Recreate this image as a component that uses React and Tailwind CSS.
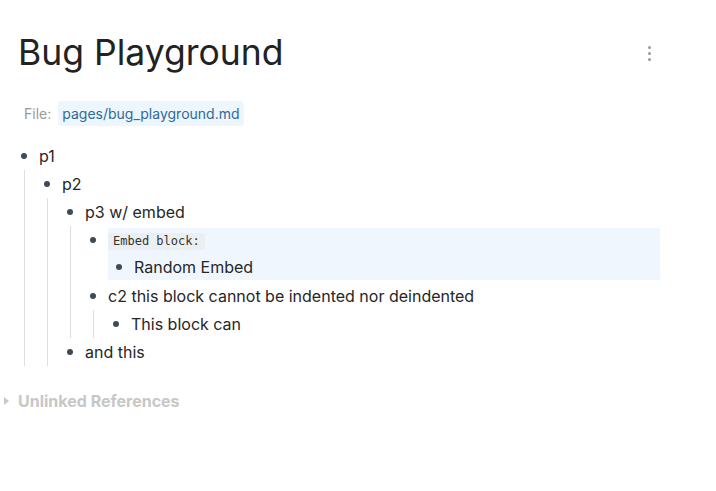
const font = { fontFamily: "Inter, 'Noto Sans', sans-serif" };

function Bullet() {
  return (
    <span className="w-4 h-7 shrink-0 flex items-center justify-center">
      <span className="w-[6px] h-[6px] rounded-full bg-[#3f4a57]" />
    </span>
  );
}

function Block({ text, children }) {
  return (
    <div>
      <div className="flex items-center h-7">
        <Bullet />
        <span className="ml-[7px] text-[16px] text-[#262626]">{text}</span>
      </div>
      {children && <div className="ml-2 border-l border-[#dedede] pl-[14px]">{children}</div>}
    </div>
  );
}

function EmbedBlock() {
  return (
    <div className="flex items-start">
      <Bullet />
      <div className="ml-[7px] my-[2px] flex-1 bg-[#eff6fd]">
        <div className="h-[26px] flex items-center">
          <code
            className="px-[5px] h-[17px] flex items-center rounded-[3px] bg-[#eceff2] text-[12px] text-[#333]"
            style={{ fontFamily: "'DejaVu Sans Mono', monospace" }}
          >
            Embed block:
          </code>
        </div>
        <div className="flex items-center h-[26px] pl-[3px]">
          <span className="w-4 h-[26px] flex items-center justify-center">
            <span className="w-[6px] h-[6px] rounded-full bg-[#3f4a57]" />
          </span>
          <span className="ml-[7px] text-[16px] text-[#262626]">Random Embed</span>
        </div>
      </div>
    </div>
  );
}

export default function App() {
  return (
    <div className="w-[716px] h-[491px] bg-white relative" style={font}>
      <div className="w-[660px]">
        <div className="flex items-start justify-between pt-[28px] pl-[18px]">
          <h1 className="text-[35.5px] leading-[50px] text-[#222] font-normal">Bug Playground</h1>
          <div className="flex flex-col gap-[3px] pt-[18px] mr-[9px]">
            <span className="w-[3px] h-[3px] rounded-full bg-[#999]" />
            <span className="w-[3px] h-[3px] rounded-full bg-[#999]" />
            <span className="w-[3px] h-[3px] rounded-full bg-[#999]" />
          </div>
        </div>

        <div className="flex items-center mt-[23px] pl-[24px] text-[14px]">
          <span className="text-[#9a9a9a]">File:</span>
          <span className="ml-[7px] h-[25px] px-[4px] flex items-center rounded-[4px] bg-[#eef6fd] text-[#2d6a9a]">
            pages/bug_playground.md
          </span>
        </div>

        <div className="mt-[16px] pl-[16px]">
          <Block text="p1">
            <Block text="p2">
              <Block text="p3 w/ embed">
                <EmbedBlock />
                <Block text="c2 this block cannot be indented nor deindented">
                  <Block text="This block can" />
                </Block>
              </Block>
              <Block text="and this" />
            </Block>
          </Block>
        </div>

        <div className="flex items-center mt-[23px] pl-[2px] text-[16px] font-bold text-[#c7c7c7]">
          <svg width="9" height="10" viewBox="0 0 9 10" className="mr-[7px]">
            <path d="M2 1 L7 5 L2 9 Z" fill="#c7c7c7" />
          </svg>
          Unlinked References
        </div>
      </div>
    </div>
  );
}
